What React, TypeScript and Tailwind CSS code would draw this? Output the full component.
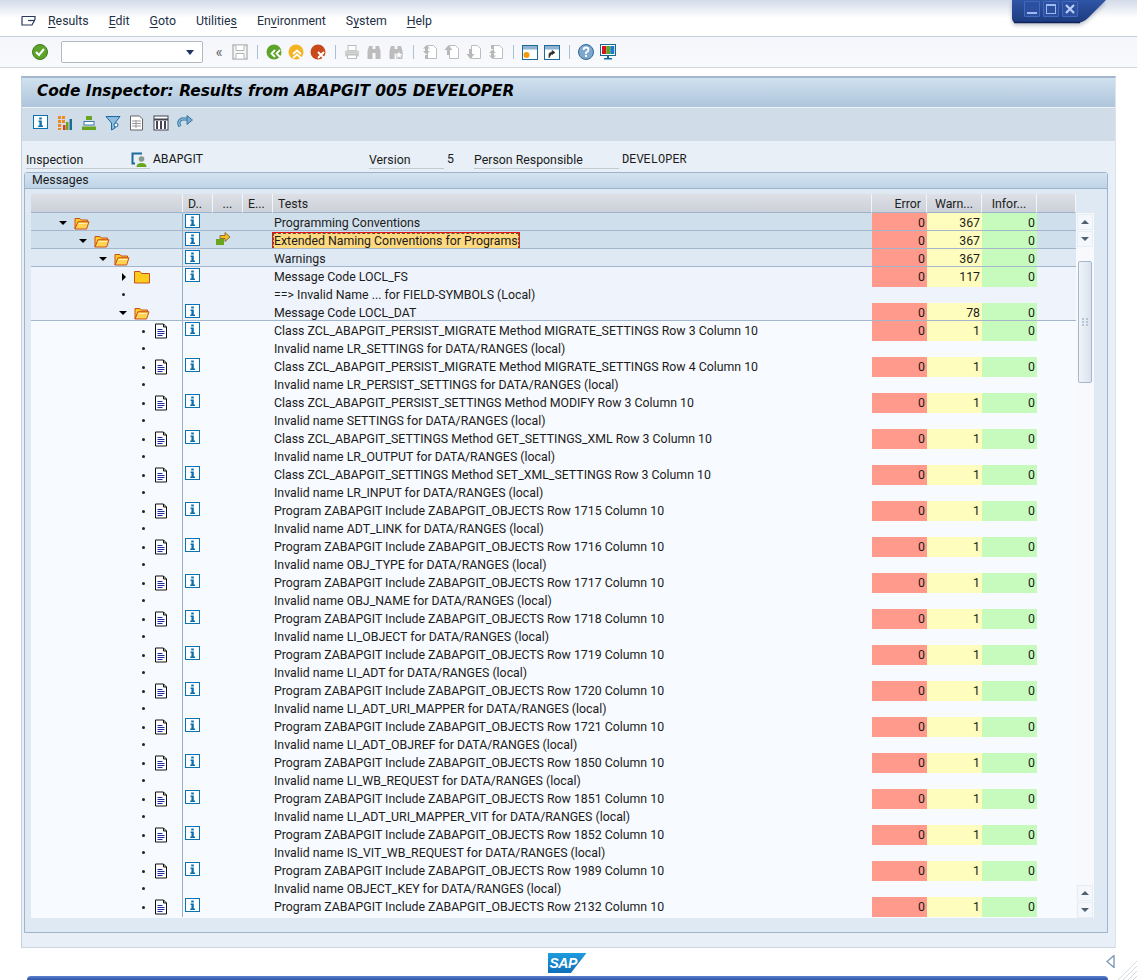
import type { ReactNode } from "react";

const indent: Record<number, string> = {
  0: "pl-[29px]",
  1: "pl-[49px]",
  2: "pl-[69px]",
  3: "pl-[89px]",
  4: "pl-[109px]",
};

type Row = {
  text: string;
  level: number;
  kind: "open" | "closed" | "doc" | "none";
  info?: boolean;
  counts?: [number, number, number];
  bg: string;
  line?: boolean;
  marker?: boolean;
  selected?: boolean;
};

const top: Row[] = [
  { text: "Programming Conventions", level: 0, kind: "open", info: true, counts: [0, 367, 0], bg: "bg-[#d0dfec]", line: true },
  { text: "Extended Naming Conventions for Programs", level: 1, kind: "open", info: true, counts: [0, 367, 0], bg: "bg-[#d0dfec]", line: true, marker: true, selected: true },
  { text: "Warnings", level: 2, kind: "open", info: true, counts: [0, 367, 0], bg: "bg-[#dfe9f4]", line: true },
  { text: "Message Code LOCL_FS", level: 3, kind: "closed", info: true, counts: [0, 117, 0], bg: "bg-[#eff4fc]" },
  { text: "==> Invalid Name ... for FIELD-SYMBOLS (Local)", level: 3, kind: "none", bg: "bg-[#eff4fc]" },
  { text: "Message Code LOCL_DAT", level: 3, kind: "open", info: true, counts: [0, 78, 0], bg: "bg-[#eff4fc]", line: true },
];

const findings: [string, string][] = [
  ["Class ZCL_ABAPGIT_PERSIST_MIGRATE Method MIGRATE_SETTINGS Row 3 Column 10", "Invalid name LR_SETTINGS for DATA/RANGES (local)"],
  ["Class ZCL_ABAPGIT_PERSIST_MIGRATE Method MIGRATE_SETTINGS Row 4 Column 10", "Invalid name LR_PERSIST_SETTINGS for DATA/RANGES (local)"],
  ["Class ZCL_ABAPGIT_PERSIST_SETTINGS Method MODIFY Row 3 Column 10", "Invalid name SETTINGS for DATA/RANGES (local)"],
  ["Class ZCL_ABAPGIT_SETTINGS Method GET_SETTINGS_XML Row 3 Column 10", "Invalid name LR_OUTPUT for DATA/RANGES (local)"],
  ["Class ZCL_ABAPGIT_SETTINGS Method SET_XML_SETTINGS Row 3 Column 10", "Invalid name LR_INPUT for DATA/RANGES (local)"],
  ["Program ZABAPGIT Include ZABAPGIT_OBJECTS Row 1715 Column 10", "Invalid name ADT_LINK for DATA/RANGES (local)"],
  ["Program ZABAPGIT Include ZABAPGIT_OBJECTS Row 1716 Column 10", "Invalid name OBJ_TYPE for DATA/RANGES (local)"],
  ["Program ZABAPGIT Include ZABAPGIT_OBJECTS Row 1717 Column 10", "Invalid name OBJ_NAME for DATA/RANGES (local)"],
  ["Program ZABAPGIT Include ZABAPGIT_OBJECTS Row 1718 Column 10", "Invalid name LI_OBJECT for DATA/RANGES (local)"],
  ["Program ZABAPGIT Include ZABAPGIT_OBJECTS Row 1719 Column 10", "Invalid name LI_ADT for DATA/RANGES (local)"],
  ["Program ZABAPGIT Include ZABAPGIT_OBJECTS Row 1720 Column 10", "Invalid name LI_ADT_URI_MAPPER for DATA/RANGES (local)"],
  ["Program ZABAPGIT Include ZABAPGIT_OBJECTS Row 1721 Column 10", "Invalid name LI_ADT_OBJREF for DATA/RANGES (local)"],
  ["Program ZABAPGIT Include ZABAPGIT_OBJECTS Row 1850 Column 10", "Invalid name LI_WB_REQUEST for DATA/RANGES (local)"],
  ["Program ZABAPGIT Include ZABAPGIT_OBJECTS Row 1851 Column 10", "Invalid name LI_ADT_URI_MAPPER_VIT for DATA/RANGES (local)"],
  ["Program ZABAPGIT Include ZABAPGIT_OBJECTS Row 1852 Column 10", "Invalid name IS_VIT_WB_REQUEST for DATA/RANGES (local)"],
  ["Program ZABAPGIT Include ZABAPGIT_OBJECTS Row 1989 Column 10", "Invalid name OBJECT_KEY for DATA/RANGES (local)"],
];

const rows: Row[] = [
  ...top,
  ...findings.flatMap(([a, b]): Row[] => [
    { text: a, level: 4, kind: "doc", info: true, counts: [0, 1, 0], bg: "bg-[#f7faff]" },
    { text: b, level: 4, kind: "none", bg: "bg-[#f7faff]" },
  ]),
  { text: "Program ZABAPGIT Include ZABAPGIT_OBJECTS Row 2132 Column 10", level: 4, kind: "doc", info: true, counts: [0, 1, 0], bg: "bg-[#f7faff]" },
];

const tableCols = "grid grid-cols-[152px_30px_30px_30px_599px_55px_55px_55px_39px]";

function Ico({ children, w = 16, h = 16 }: { children: ReactNode; w?: number; h?: number }) {
  return (
    <svg width={w} height={h} viewBox={`0 0 ${w} ${h}`} className="block shrink-0">
      {children}
    </svg>
  );
}

function InfoIcon() {
  return (
    <Ico w={15} h={14}>
      <rect x="0.5" y="0.5" width="14" height="13" fill="#fff" stroke="#0a72b4" />
      <path d="M6.2 2.5h2.6v2H6.2zM5.5 5.5h3.3v5h1.2V12H5.2v-1.5h1.2V7H5.5z" fill="#0a72b4" />
    </Ico>
  );
}

function FolderOpen() {
  return (
    <Ico>
      <path d="M1 14V3.5h5L7.2 5h6.3v2H4.5L1 14z" fill="#ffcb1e" stroke="#c9501c" />
      <path d="M1 14l3-7.2h11L12.6 14z" fill="#ffd451" stroke="#c9501c" />
      <path d="M4.5 8.5H13" stroke="#fff" strokeOpacity=".6" />
    </Ico>
  );
}

function FolderClosed() {
  return (
    <Ico>
      <path d="M.5 14V2.5H6l1.5 2h8V14z" fill="#ffcb1e" stroke="#c9501c" />
    </Ico>
  );
}

function DocIcon() {
  return (
    <Ico>
      <path d="M1.5 1h8l3 3v11h-11z" fill="#fff" stroke="#111" />
      <path d="M9.5 1v3h3" fill="none" stroke="#111" />
      <path d="M3.5 6.5h5M3.5 8.5h7M3.5 10.5h7M3.5 12.5h5" stroke="#1c2ca0" />
    </Ico>
  );
}

function MarkerIcon() {
  return (
    <Ico>
      <rect x="1" y="8" width="8" height="6" fill="#6aa51e" />
      <path d="M5 4.5h5v-3L15 6l-5 4.5v-3H5z" fill="#f3bd2a" stroke="#7b5a10" strokeWidth=".8" />
    </Ico>
  );
}

function Arrow({ kind }: { kind: Row["kind"] }) {
  if (kind === "open")
    return <span className="block h-0 w-0 border-x-[4px] border-t-[4px] border-x-transparent border-t-black -ml-px" />;
  if (kind === "closed")
    return <span className="block h-0 w-0 ml-px border-y-[4px] border-l-[4px] border-y-transparent border-l-black" />;
  return <span className="block h-[3px] w-[3px] mx-auto rounded-full bg-[#222]" />;
}

function TreeRow({ row }: { row: Row }) {
  return (
    <div className={`${tableCols} h-[18px] ${row.bg} ${row.line ? "relative after:absolute after:inset-x-0 after:bottom-0 after:h-px after:bg-[#a3b6cb]" : ""}`}>
      <div className={`flex items-center gap-2 border-r border-[#9aacc0] ${indent[row.level]}`}>
        <span className="flex w-[6px] shrink-0 items-center justify-center">
          <Arrow kind={row.kind === "doc" ? "none" : row.kind} />
        </span>
        {row.kind === "open" && <FolderOpen />}
        {row.kind === "closed" && <FolderClosed />}
        {row.kind === "doc" && <DocIcon />}
      </div>
      <div className="flex items-start pl-[2px] pt-px">{row.info && <InfoIcon />}</div>
      <div className="flex items-start pl-[2px]">{row.marker && <MarkerIcon />}</div>
      <div />
      <div className="flex items-center">
        {row.selected ? (
          <span className="-ml-px box-border flex h-[18px] items-center border border-[#e8121c] bg-[#ffd97f] pl-[1px] pr-[1px] pt-[1px] outline-1 -outline-offset-2 outline-dashed outline-black/60">
            {row.text}
          </span>
        ) : (
          <span className="pl-[1px] pt-[1px]">{row.text}</span>
        )}
      </div>
      {row.counts ? (
        <>
          <div className="bg-[#ff9a8c] pr-[2px] text-right leading-[20px]">{row.counts[0]}</div>
          <div className="bg-[#fffdbd] pr-[2px] text-right leading-[20px]">{row.counts[1]}</div>
          <div className="bg-[#c6fbbd] pr-[2px] text-right leading-[20px]">{row.counts[2]}</div>
        </>
      ) : (
        <>
          <div />
          <div />
          <div />
        </>
      )}
      <div />
    </div>
  );
}

function HeadCell({ children, align = "left" }: { children?: ReactNode; align?: "left" | "right" | "center" }) {
  const alignCls = align === "right" ? "justify-end pr-[5px]" : align === "center" ? "justify-center" : "pl-[5px]";
  return (
    <div className={`flex h-[19px] items-center border-r border-[#f2f4f7] border-b border-b-[#9fb2c8] bg-gradient-to-b from-[#dde0e6] to-[#ccd0d8] pt-[2px] text-[#222] ${alignCls}`}>
      {children}
    </div>
  );
}

function ScrollBtn({ dir }: { dir: "up" | "down" }) {
  return (
    <div className="flex h-[16px] w-[16px] items-center justify-center border border-[#e6edf5] bg-[#f4f7fc]">
      <span
        className={
          dir === "up"
            ? "h-0 w-0 border-x-[4px] border-b-[4px] border-x-transparent border-b-[#4e6174]"
            : "h-0 w-0 border-x-[4px] border-t-[4px] border-x-transparent border-t-[#4e6174]"
        }
      />
    </div>
  );
}

function ScrollBar() {
  return (
    <div className="flex w-[18px] flex-col">
      <div className="h-[19px]" />
      <div className="flex h-[705px] flex-col items-center bg-[#f7f9fd] pt-px">
        <ScrollBtn dir="up" />
        <div className="mt-px"><ScrollBtn dir="down" /></div>
        <div className="mt-[14px] flex h-[122px] w-[14px] items-center justify-center rounded-[2px] border border-[#a8b8ca] bg-gradient-to-r from-[#f0f4f9] to-[#d9e3ee]">
          <Ico w={6} h={8}>
            <path d="M0 0h2v2H0zM4 0h2v2H4zM0 3h2v2H0zM4 3h2v2H4zM0 6h2v2H0zM4 6h2v2H4z" fill="#b7c5d3" />
          </Ico>
        </div>
        <div className="flex-1" />
        <ScrollBtn dir="up" />
        <div className="mt-px"><ScrollBtn dir="down" /></div>
      </div>
    </div>
  );
}

function Sep() {
  return <span className="ml-[3px] mr-[2px] h-[14px] w-px bg-[#a9c0d6]" />;
}

function Save() {
  return (
    <Ico>
      <path d="M1 1h14v14H1z" fill="#f5f5f5" stroke="#b4b4b4" strokeWidth="1.4" />
      <path d="M4 1.5v5h8v-5M4 14.5v-5h8v5" fill="#fff" stroke="#b4b4b4" />
    </Ico>
  );
}

function PageArrow({ variant }: { variant: number }) {
  return (
    <Ico>
      <path d="M5.5 1.5h6l3 3v10h-9z" fill="#fff" stroke="#bdbdbd" />
      {variant === 0 && <path d="M4.5 1L8 4.5H6V7h2l-3.5 3.5L1 7h2V4.5H1zM3 11h3v4H3z" fill="#b8b8b8" />}
      {variant === 1 && <path d="M4.5 1l4 5H6v5H3V6H.5z" fill="#b8b8b8" />}
      {variant === 2 && <path d="M4.5 15l4-5H6V5H3v5H.5z" fill="#b8b8b8" />}
      {variant === 3 && <path d="M3 1h3v4H3zM4.5 15L8 11.5H6V9h2L4.5 5.5 1 9h2v2.5H1z" fill="#b8b8b8" />}
    </Ico>
  );
}

function Binoculars({ next }: { next?: boolean }) {
  return (
    <Ico>
      <path d="M1.5 15V7L3 2h3.5v13zM14.5 15V7L13 2H9.5v13z" fill="#bcbcbc" />
      <rect x="6" y="5" width="4" height="4" fill="#bcbcbc" />
      {next && <path d="M11 7l1.2 2.5 2.8.3-2 2 .5 2.7L11 13l-2.500 1.500.5-2.700-2-2 2.800-.3z" fill="#fff" stroke="#bcbcbc" strokeWidth=".7" />}
    </Ico>
  );
}

function MenuItem({ pre = "", u, post = "" }: { pre?: string; u: string; post?: string }) {
  return (
    <span className="text-[#223047]">
      {pre}
      <span className="underline underline-offset-2">{u}</span>
      {post}
    </span>
  );
}

function WindowButtons() {
  return (
    <div className="absolute right-[31px] top-0 h-[24px] w-[94px] drop-shadow-[0_2px_2px_rgba(60,70,100,0.35)]">
      <svg width="94" height="24" viewBox="0 0 94 24" className="absolute inset-0">
        <defs>
          <linearGradient id="winbar" x1="0" y1="0" x2="0" y2="1">
            <stop offset="0" stopColor="#2f55a6" />
            <stop offset="1" stopColor="#1d3a7d" />
          </linearGradient>
        </defs>
        <path d="M0 0h94L76 18q-5 5-12 5H5q-5 0-5-5z" fill="url(#winbar)" />
        <path d="M2 22.5h66" stroke="#0d2258" strokeWidth="1.5" />
      </svg>
      <div className="relative flex gap-[3px] pl-[12px] pt-px">
        {[0, 1, 2].map((i) => (
          <div key={i} className="flex h-[16px] w-[16px] items-center justify-center rounded-[1px] border border-[#4269bd] bg-[#2c4f9f]">
            {i === 0 && <span className="mt-[8px] h-[2px] w-[10px] bg-[#9db9f2]" />}
            {i === 1 && <span className="h-[10px] w-[10px] border border-t-[2px] border-[#9db9f2]" />}
            {i === 2 && (
              <Ico w={10} h={10}>
                <path d="M1 1l8 8M9 1l-8 8" stroke="#b9cef8" strokeWidth="2.2" />
              </Ico>
            )}
          </div>
        ))}
      </div>
    </div>
  );
}

function SapLogo() {
  return (
    <div className="flex h-[20px] w-[39px] items-center bg-gradient-to-b from-[#1f9be0] to-[#0f6fb8] pl-[2px] [clip-path:polygon(0_0,100%_0,60%_100%,0_100%)]">
      <span className="font-['Liberation_Sans',sans-serif] text-[14px] font-bold italic leading-none tracking-[-0.5px] text-white">SAP</span>
    </div>
  );
}

export default function App() {
  return (
    <div className="relative flex h-[980px] w-[1137px] flex-col overflow-hidden bg-white font-['Roboto',sans-serif] text-[12.33px] text-[#1b1b1b]">
      <WindowButtons />

      {/* Menu bar */}
      <header className="flex h-[37px] items-center gap-5 border-b border-[#c3cddb] bg-gradient-to-b from-[#d3dbe9] via-white to-white pl-[21px] pt-[7px]">
        <Ico>
          <path d="M1 2.5h13v3M14 5.5L11 11H1V2.5" fill="none" stroke="#27375a" strokeWidth="1.2" />
          <path d="M7 6.5h7" stroke="#27375a" strokeWidth="1.2" />
        </Ico>
        <nav className="-ml-[9px] flex items-center gap-5">
          <MenuItem u="R" post="esults" />
          <MenuItem u="E" post="dit" />
          <MenuItem u="G" post="oto" />
          <MenuItem pre="Utilitie" u="s" />
          <MenuItem pre="En" u="v" post="ironment" />
          <MenuItem pre="S" u="y" post="stem" />
          <MenuItem u="H" post="elp" />
        </nav>
      </header>

      {/* Standard toolbar */}
      <div className="flex h-[31px] items-center gap-[6px] border-b border-[#d3d7e0] bg-gradient-to-b from-[#f4f6fb] to-[#f9fafd] pl-[32px]">
        <Ico>
          <circle cx="8" cy="8" r="7.5" fill="#5ea32a" stroke="#3f7c1a" />
          <path d="M4 8l3 3 5-6" fill="none" stroke="#fff" strokeWidth="2" />
        </Ico>
        <div className="ml-[7px] flex h-[22px] w-[142px] items-center justify-end rounded-[2px] border border-[#b4b8c0] bg-white pr-[8px]">
          <span className="h-0 w-0 border-x-[4px] border-t-[5px] border-x-transparent border-t-[#1d3560]" />
        </div>
        <span className="ml-[3px] w-[14px] text-center text-[15px] leading-none text-[#666]">«</span>
        <Save />
        <Sep />
        <Ico>
          <circle cx="8" cy="8" r="7.5" fill="#5ea32a" />
          <path d="M9 6L5.5 9.5 9 13M14 6l-3.500 3.500L14 13" fill="none" stroke="#fff" strokeWidth="1.8" />
        </Ico>
        <Ico>
          <circle cx="8" cy="8" r="7.5" fill="#f5b31f" />
          <path d="M5 10l4-3.500 4 3.500M5 14l4-3.500 4 3.500" fill="none" stroke="#fff" strokeWidth="1.8" />
        </Ico>
        <Ico>
          <circle cx="8" cy="8" r="7.5" fill="#c8491c" />
          <path d="M8 8l6 6M14 8l-6 6" stroke="#fff" strokeWidth="2" />
        </Ico>
        <Sep />
        <Ico>
          <rect x="4" y="1.5" width="8" height="5" fill="#fff" stroke="#bcbcbc" />
          <rect x="1" y="6.5" width="14" height="6" rx="1" fill="#cfcfcf" />
          <rect x="3.5" y="11" width="9" height="3.5" fill="#fff" stroke="#bcbcbc" />
        </Ico>
        <Binoculars />
        <Binoculars next />
        <Sep />
        <PageArrow variant={0} />
        <PageArrow variant={1} />
        <PageArrow variant={2} />
        <PageArrow variant={3} />
        <Sep />
        <Ico>
          <rect x=".5" y="1.5" width="15" height="14" fill="#fff" stroke="#1c6a9c" />
          <rect x="1" y="2" width="14" height="3.5" fill="#8eb3d3" />
          <circle cx="4.5" cy="11" r="3" fill="#f59a0a" />
        </Ico>
        <Ico>
          <rect x=".5" y="1.5" width="15" height="14" fill="#fff" stroke="#1c6a9c" />
          <rect x="1" y="2" width="14" height="3.5" fill="#8eb3d3" />
          <path d="M5 14v-3.500q0-2 2-2h2M8 6.500l3 2-3 2z" fill="#333" stroke="#333" strokeWidth=".8" />
        </Ico>
        <Sep />
        <Ico>
          <circle cx="8" cy="8" r="7.5" fill="#7da7cc" stroke="#2b6a9c" />
          <path d="M5.500 6q0-2.500 2.500-2.500t2.500 2.300Q10.500 7.500 8 8.500V10" fill="none" stroke="#fff" strokeWidth="1.8" />
          <rect x="7" y="11" width="2" height="2" fill="#fff" />
        </Ico>
        <Ico>
          <rect x=".5" y=".5" width="15" height="11" fill="#fff" stroke="#136a98" />
          <rect x="2" y="2" width="4.3" height="8" fill="#d8141c" />
          <rect x="6.3" y="2" width="4" height="8" fill="#5aa52a" />
          <rect x="10.3" y="2" width="4" height="8" fill="#1f7cc4" />
          <path d="M7 12h2v2h3v1.500H4V14h3z" fill="#136a98" />
        </Ico>
      </div>

      {/* Main panel */}
      <main className="ml-[21px] mt-[8px] flex h-[872px] w-[1095px] flex-col border border-t-[2px] border-[#a3b6cb] border-b-[#ccd5e2] border-l-[#c4d0de] border-r-[#dde4ee] bg-[#e8eff6]">
        <div className="flex h-[30px] shrink-0 items-center border-b border-[#eef3f8] bg-gradient-to-b from-[#d0e1ef] to-[#aec5dc] pb-[1px] pl-[15px] font-['DejaVu_Sans',Verdana,sans-serif] text-[15.4px] font-bold italic text-black">
          Code Inspector: Results from ABAPGIT 005 DEVELOPER
        </div>
        <div className="flex h-[33px] shrink-0 items-start gap-[8px] bg-[#d0dde8] pl-[11px] pt-[7px]">
          <div className="w-[16px]"><InfoIcon /></div>
          <Ico>
            <path d="M1 1h3v3H1zM5 1h3v3H5zM1 5h3v3H1zM5 5h3v3H5zM1 9h3v3H1zM1 13h3v2H1z" fill="#ef8a1e" />
            <path d="M6 10h2.500v5H6z" fill="#e03a1a" />
            <path d="M9 7h2.500v8H9z" fill="#6aa51e" />
            <path d="M12.500 4H15v11h-2.500z" fill="#1c6a9c" />
          </Ico>
          <Ico>
            <rect x="5" y="1" width="6" height="4" fill="#6aa51e" />
            <rect x="3" y="6.5" width="10" height="3.5" fill="#fff" stroke="#3a7ba8" />
            <rect x="1" y="11.5" width="14" height="3.5" fill="#6aa51e" />
          </Ico>
          <Ico>
            <path d="M1 1.5h14L10 8v5l-3.500 2V8z" fill="#8dbce0" stroke="#1c6a9c" />
            <circle cx="11" cy="10" r="2" fill="#fff" stroke="#1c6a9c" />
          </Ico>
          <Ico>
            <path d="M1.500 1h9l3 3v11h-12z" fill="#fff" stroke="#666" />
            <path d="M3 6h9M3 8.500h9M3 11h9M7 5v8" stroke="#999" />
          </Ico>
          <Ico>
            <rect x="1" y="1" width="14" height="14" fill="#fff" stroke="#445" />
            <path d="M1 4.500h14" stroke="#445" strokeWidth="2" />
            <path d="M4 6v8M8 6v8M12 6v8" stroke="#445" strokeWidth="2" />
          </Ico>
          <Ico>
            <path d="M3 11.500Q0 6 5 4h6" fill="none" stroke="#1c6a9c" strokeWidth="3.2" />
            <path d="M3 11.500Q0 6 5 4h6" fill="none" stroke="#8db6d6" strokeWidth="1.6" />
            <path d="M10 .5L15.500 5 10 9.500z" fill="#7da9cc" stroke="#1c6a9c" strokeWidth=".8" />
          </Ico>
        </div>

        {/* Header fields */}
        <div className="flex h-[31px] shrink-0 items-end pb-[3px] pl-[4px]">
          <div className="flex h-[19px] w-[124px] items-center border-b border-[#c3c9d1] pt-[2px]">Inspection</div>
          <div className="flex h-[19px] w-[219px] items-center gap-[6px]">
            <span className="-ml-[19px]">
              <Ico>
                <path d="M11 1.500H1.500v10H4" fill="none" stroke="#1c6a9c" strokeWidth="2" />
                <circle cx="10.500" cy="7" r="2.800" fill="#8a9a8a" />
                <path d="M5.500 15q0-4 5-4t5 4z" fill="#6aa51e" />
              </Ico>
            </span>
            <span className="font-['DejaVu_Sans',sans-serif] text-[11.5px]">ABAPGIT</span>
          </div>
          <div className="flex h-[19px] w-[75px] items-center border-b border-[#c3c9d1] pt-[2px]">Version</div>
          <div className="flex h-[19px] w-[30px] items-center pl-[3px]">5</div>
          <div className="flex h-[19px] w-[145px] items-center border-b border-[#c3c9d1] pt-[2px]">Person Responsible</div>
          <div className="flex h-[19px] items-center pl-[3px] font-['Liberation_Mono',monospace] text-[12px]">DEVELOPER</div>
        </div>

        {/* Messages box */}
        <section className="ml-[2px] flex h-[761px] w-[1084px] flex-col rounded-t-[3px] border border-[#9eb4cb] bg-[#dfe9f3]">
          <div className="flex h-[16px] items-center border-b border-[#9eb4cb] bg-gradient-to-b from-[#d5e3f0] to-[#bfd4e8] pl-[7px]">Messages</div>
          <div className="flex pl-[6px] pt-[5px]">
            <div className="w-[1045px] bg-[#f7faff]">
              <div className={tableCols}>
                <HeadCell />
                <HeadCell>D..</HeadCell>
                <HeadCell align="center">...</HeadCell>
                <HeadCell>E...</HeadCell>
                <HeadCell>Tests</HeadCell>
                <HeadCell align="right">Error</HeadCell>
                <HeadCell align="center">Warn...</HeadCell>
                <HeadCell align="center">Infor...</HeadCell>
                <HeadCell />
              </div>
              {rows.map((row, i) => (
                <TreeRow key={i} row={row} />
              ))}
            </div>
            <ScrollBar />
          </div>
        </section>
      </main>

      {/* Status bar */}
      <footer className="relative flex flex-1 justify-center">
        <div className="mt-[5px] -ml-[3px]">
          <SapLogo />
        </div>
        <svg width="9" height="13" viewBox="0 0 9 13" className="absolute right-[22px] top-[7px]">
          <path d="M8 .5v12L1 6.500z" fill="#fff" stroke="#7d9ab5" strokeWidth="1.4" />
        </svg>
        <div className="absolute bottom-0 left-[27px] h-[4px] w-[1081px] rounded-t-[8px] bg-gradient-to-b from-[#5b80cf] to-[#2f55a6]" />
        <svg width="20" height="20" viewBox="0 0 20 20" className="absolute bottom-0 right-0">
          <path d="M20 1L1 20M20 6L6 20M20 11L11 20M20 16l-4 4" stroke="#d4dbe6" />
        </svg>
      </footer>
    </div>
  );
}
